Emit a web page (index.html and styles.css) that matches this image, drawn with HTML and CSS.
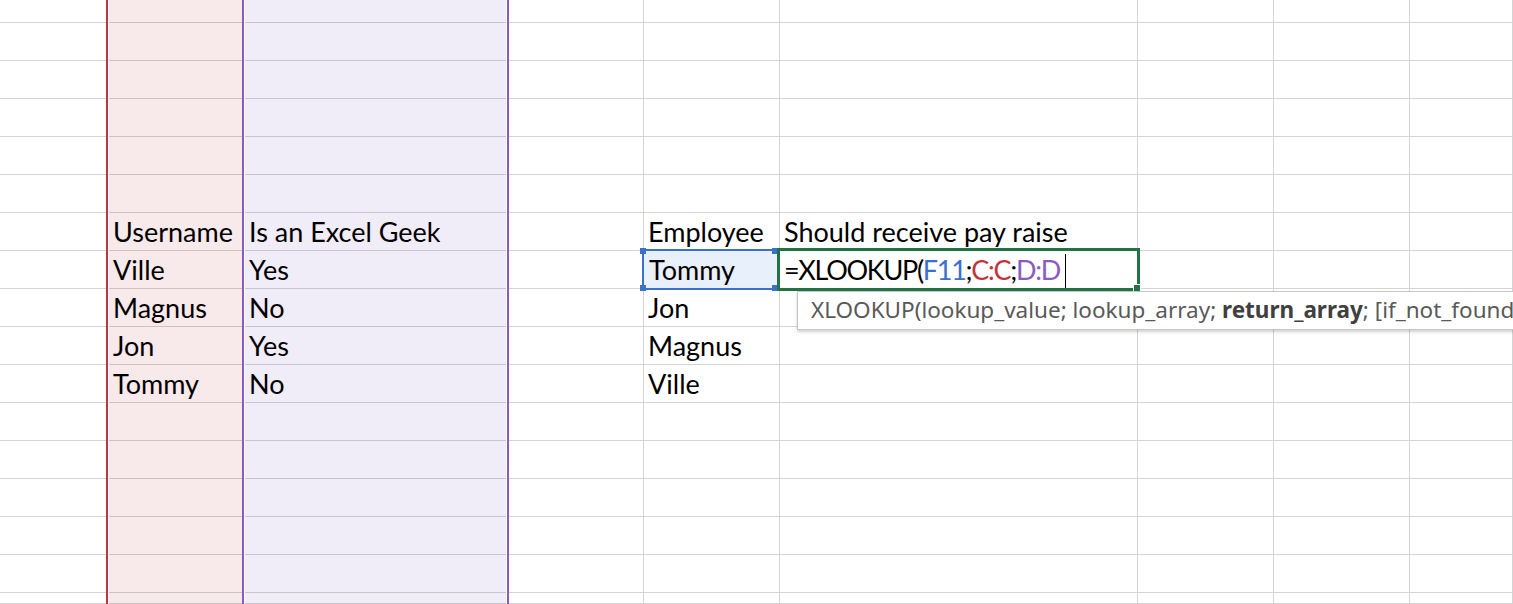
FILE: index.html
```html
<!DOCTYPE html>
<html>
<head>
<meta charset="utf-8">
<link rel="stylesheet" href="styles.css">
</head>
<body>
<div class="sheet">
  <div class="grid">
    <!-- r0 -->
    <div class="c"></div><div class="c b"></div><div class="c p"></div><div class="c"></div><div class="c"></div><div class="c"></div><div class="c"></div><div class="c"></div><div class="c"></div>
    <!-- r1 -->
    <div class="c"></div><div class="c b"></div><div class="c p"></div><div class="c"></div><div class="c"></div><div class="c"></div><div class="c"></div><div class="c"></div><div class="c"></div>
    <!-- r2 -->
    <div class="c"></div><div class="c b"></div><div class="c p"></div><div class="c"></div><div class="c"></div><div class="c"></div><div class="c"></div><div class="c"></div><div class="c"></div>
    <!-- r3 -->
    <div class="c"></div><div class="c b"></div><div class="c p"></div><div class="c"></div><div class="c"></div><div class="c"></div><div class="c"></div><div class="c"></div><div class="c"></div>
    <!-- r4 -->
    <div class="c"></div><div class="c b"></div><div class="c p"></div><div class="c"></div><div class="c"></div><div class="c"></div><div class="c"></div><div class="c"></div><div class="c"></div>
    <!-- r5 -->
    <div class="c"></div><div class="c b"></div><div class="c p"></div><div class="c"></div><div class="c"></div><div class="c"></div><div class="c"></div><div class="c"></div><div class="c"></div>
    <!-- r6 headers -->
    <div class="c"></div><div class="c b">Username</div><div class="c p">Is an Excel Geek</div><div class="c"></div><div class="c">Employee</div><div class="c">Should receive pay raise</div><div class="c"></div><div class="c"></div><div class="c"></div>
    <!-- r7 -->
    <div class="c"></div><div class="c b">Ville</div><div class="c p">Yes</div><div class="c"></div><div class="c sel">Tommy</div><div class="c formula">=XLOOKUP(<span class="ref-f">F11</span>;<span class="ref-c">C:C</span>;<span class="ref-d">D:D</span><span class="caret"></span></div><div class="c"></div><div class="c"></div><div class="c"></div>
    <!-- r8 -->
    <div class="c"></div><div class="c b">Magnus</div><div class="c p">No</div><div class="c"></div><div class="c">Jon</div><div class="c"></div><div class="c"></div><div class="c"></div><div class="c"></div>
    <!-- r9 -->
    <div class="c"></div><div class="c b">Jon</div><div class="c p">Yes</div><div class="c"></div><div class="c">Magnus</div><div class="c"></div><div class="c"></div><div class="c"></div><div class="c"></div>
    <!-- r10 -->
    <div class="c"></div><div class="c b">Tommy</div><div class="c p">No</div><div class="c"></div><div class="c">Ville</div><div class="c"></div><div class="c"></div><div class="c"></div><div class="c"></div>
    <!-- r11 -->
    <div class="c"></div><div class="c b"></div><div class="c p"></div><div class="c"></div><div class="c"></div><div class="c"></div><div class="c"></div><div class="c"></div><div class="c"></div>
    <!-- r12 -->
    <div class="c"></div><div class="c b"></div><div class="c p"></div><div class="c"></div><div class="c"></div><div class="c"></div><div class="c"></div><div class="c"></div><div class="c"></div>
    <!-- r13 -->
    <div class="c"></div><div class="c b"></div><div class="c p"></div><div class="c"></div><div class="c"></div><div class="c"></div><div class="c"></div><div class="c"></div><div class="c"></div>
    <!-- r14 -->
    <div class="c"></div><div class="c b"></div><div class="c p"></div><div class="c"></div><div class="c"></div><div class="c"></div><div class="c"></div><div class="c"></div><div class="c"></div>
    <!-- r15 -->
    <div class="c"></div><div class="c b"></div><div class="c p"></div><div class="c"></div><div class="c"></div><div class="c"></div><div class="c"></div><div class="c"></div><div class="c"></div>
    <!-- r16 -->
    <div class="c"></div><div class="c b"></div><div class="c p"></div><div class="c"></div><div class="c"></div><div class="c"></div><div class="c"></div><div class="c"></div><div class="c"></div>
  </div>

  <div class="range range-b"></div>
  <div class="range range-c"></div>

  <div class="selbox">
    <span class="h h-tl"></span><span class="h h-bl"></span><span class="h h-tr"></span><span class="h h-br"></span>
  </div>
  <div class="active"><span class="fill-handle"></span></div>

  <div class="tooltip">XLOOKUP(lookup_value; lookup_array; <b>return_array</b>; [if_not_found]; [match_mode]; [search_mode])</div>
</div>
</body>
</html>
```

FILE: styles.css
```css
html, body {
  margin: 0;
  padding: 0;
  background: #fff;
  overflow: hidden;
}

.sheet {
  position: relative;
  width: 1513px;
  height: 604px;
  overflow: hidden;
  font-family: Lato, "Liberation Sans", sans-serif;
  font-size: 27px;
  color: #000;
}

.grid {
  display: grid;
  grid-template-columns: 107px 136px 265px 136px 136px 358px 136px 136px 1fr;
  grid-template-rows: 23px repeat(15, 38px) 1fr;
  height: 604px;
}

.c {
  box-sizing: border-box;
  border-right: 1px solid rgba(0, 0, 0, 0.17);
  border-bottom: 1px solid rgba(0, 0, 0, 0.17);
  padding-left: 4px;
  line-height: 37px;
  white-space: nowrap;
  overflow: visible;
}

.c.b { background: #f8e9ea; padding-left: 6px; }
.c.p { background: #f0ecf8; padding-left: 6px; }
.c.sel { background: #e8f0fb; padding-left: 5px; }

.formula { position: relative; z-index: 2; letter-spacing: -1.3px; }
.ref-f { color: #3a70cf; }
.ref-c { color: #c4323d; }
.ref-d { color: #8a5cc2; }
.caret {
  display: inline-block;
  width: 1px;
  height: 34px;
  background: #000;
  margin-left: 5px;
  vertical-align: -8px;
}

.range {
  position: absolute;
  top: 0;
  bottom: 0;
  box-sizing: border-box;
  pointer-events: none;
}
.range-b {
  left: 106px;
  width: 138px;
  border-left: 2px solid #c1343e;
  border-right: 2px solid #c1343e;
  box-shadow: inset 1px 0 0 #fff;
}
.range-c {
  left: 242px;
  width: 267px;
  border-left: 2px solid #8a5cc2;
  border-right: 2px solid #8a5cc2;
  box-shadow: inset 1px 0 0 #fff, inset -1px 0 0 #fff;
}

.selbox {
  position: absolute;
  left: 642px;
  top: 249px;
  width: 138px;
  height: 41px;
  box-sizing: border-box;
  border: 2px solid #3b72c8;
  border-right: none;
}
.h {
  position: absolute;
  width: 6px;
  height: 6px;
  background: #3b72c8;
}
.h-tl { left: -4px; top: -3px; }
.h-bl { left: -4px; bottom: -3px; }
.h-tr { right: 2px; top: -3px; }
.h-br { right: 2px; bottom: -3px; }

.active {
  position: absolute;
  left: 777px;
  top: 248px;
  width: 363px;
  height: 43px;
  box-sizing: border-box;
  border: 3px solid #217346;
  z-index: 3;
}
.fill-handle {
  position: absolute;
  right: -4px;
  bottom: -4px;
  width: 6px;
  height: 6px;
  background: #217346;
  border: 1px solid #fff;
}

.tooltip {
  position: absolute;
  left: 797px;
  top: 291px;
  height: 39px;
  box-sizing: border-box;
  padding-left: 13px;
  padding-right: 20px;
  background: #fff;
  border: 1px solid #c6c6c6;
  box-shadow: 0 2px 3px rgba(0, 0, 0, 0.18);
  font-family: "Noto Sans", "Open Sans", sans-serif;
  font-size: 22.5px;
  line-height: 36px;
  color: #595959;
  white-space: nowrap;
  z-index: 4;
}
.tooltip b { color: #404040; font-weight: 700; }
```
